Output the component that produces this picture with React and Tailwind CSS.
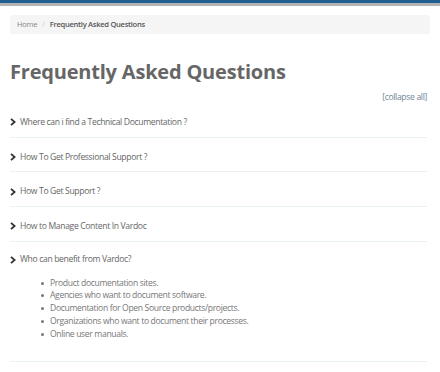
export default function App() {
  const qs = [
    "Where can i find a Technical Documentation ?",
    "How To Get Professional Support ?",
    "How To Get Support ?",
    "How to Manage Content In Vardoc",
  ];
  const items = [
    "Product documentation sites.",
    "Agencies who want to document software.",
    "Documentation for Open Source products/projects.",
    "Organizations who want to document their processes.",
    "Online user manuals.",
  ];
  const Chev = () => (
    <svg width="6" height="8" viewBox="0 0 6 8" className="shrink-0">
      <path d="M1 0.8 L4.6 4 L1 7.2" fill="none" stroke="#333" strokeWidth="1.8" />
    </svg>
  );
  return (
    <div className="w-[440px] h-[372px] bg-white overflow-hidden" style={{ fontFamily: '"Open Sans", sans-serif' }}>
      <div className="h-[3px] bg-[#1e5f8f]" />
      <div className="h-[3px] bg-[#b3b3b3]" />
      <div className="px-[10px]">
        <div className="mt-[9px] h-[19px] bg-[#f5f5f5] rounded-[3px] flex items-center pl-[7px] text-[7.6px] tracking-[-0.3px]">
          <span className="text-[#888]">Home</span>
          <span className="text-[#ccc] mx-[5px]">/</span>
          <span className="text-[#555] font-semibold">Frequently Asked Questions</span>
        </div>
        <h1 className="mt-[24px] text-[20px] leading-[28px] font-bold text-[#666] tracking-[-0.2px]">Frequently Asked Questions</h1>
        <div className="flex justify-end mt-[5px] text-[8.5px] leading-[12px] tracking-[-0.3px] text-[#6f8596] pr-[3px]">[collapse all]</div>
        <div className="w-[417px] text-[8.6px] tracking-[-0.35px] text-[#666]">
          {qs.map((q) => (
            <div key={q} className="h-[34.67px] flex items-center gap-[4px] border-b border-[#eaf1f1] pt-[5px]">
              <Chev />
              <span>{q}</span>
            </div>
          ))}
          <div className="border-b border-[#eaf1f1] pb-[21px]">
            <div className="h-[34px] flex items-center gap-[4px] pt-[2px]">
              <Chev />
              <span>Who can benefit from Vardoc?</span>
            </div>
            <ul className="ml-[31px] text-[#777] leading-[12.75px] mt-[1px]">
              {items.map((i) => (
                <li key={i} className="flex items-center gap-[6px]">
                  <span className="w-[3px] h-[3px] rounded-full bg-[#777] shrink-0" />
                  <span>{i}</span>
                </li>
              ))}
            </ul>
          </div>
        </div>
      </div>
    </div>
  );
}
